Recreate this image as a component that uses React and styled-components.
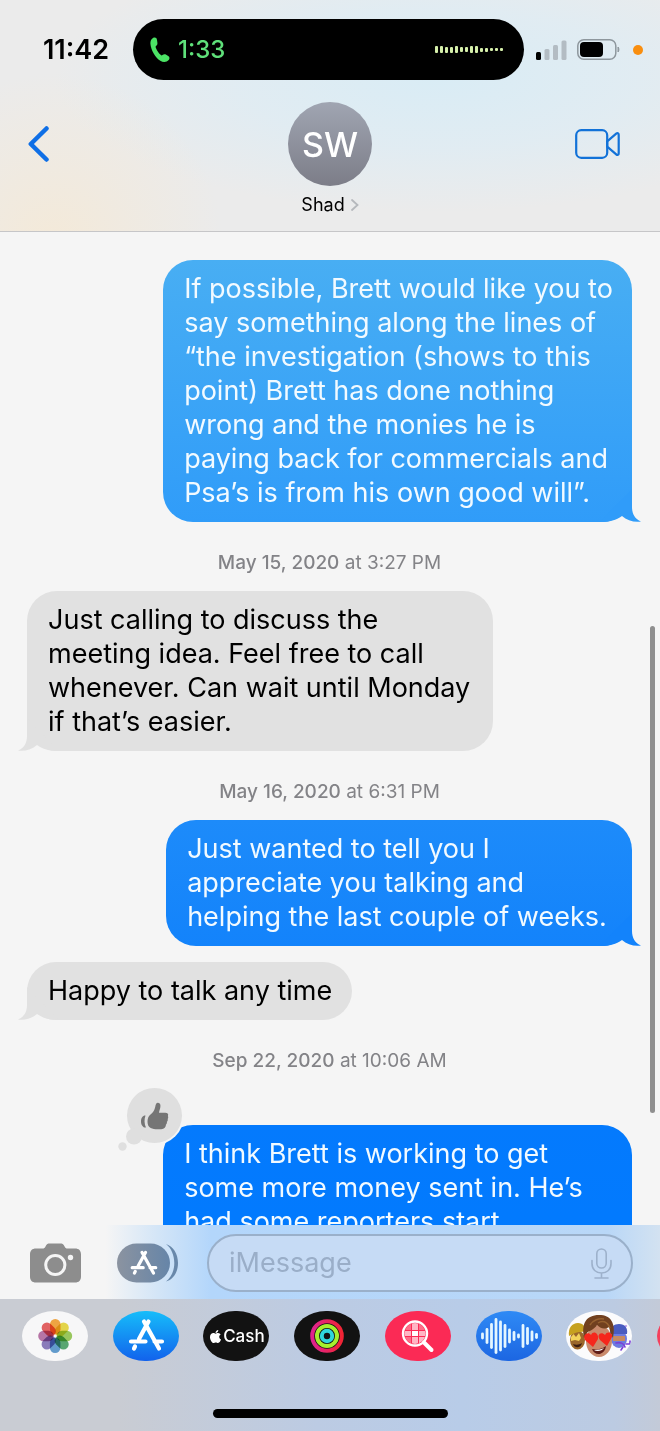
import React from 'react';
import styled, { createGlobalStyle, css } from 'styled-components';
import { FaApple } from 'react-icons/fa';

const GlobalStyle = createGlobalStyle`
  * {
    box-sizing: border-box;
  }

  body {
    margin: 0;
    font-family: Inter, 'Liberation Sans', sans-serif;
    color: #000;
    background: #f5f5f5;
  }

  button {
    padding: 0;
    border: none;
    background: none;
    font-family: inherit;
    color: inherit;
    cursor: pointer;
  }

  svg {
    display: block;
  }
`;

const levels = [7, 7, 6, 6, 7, 5, 5, 7, 7, 4, 4, 3, 3, 3];

const messages = [
  {
    id: 1,
    text: 'If possible, Brett would like you to say something along the lines of “the investigation (shows to this point) Brett has done nothing wrong and the monies he is paying back for commercials and Psa’s is from his own good will”.',
    sent: true,
    from: '#48aef3',
    to: '#309cf9',
    wide: true,
  },
  { id: 2, day: 'May 15, 2020', time: 'at 3:27 PM' },
  {
    id: 3,
    text: 'Just calling to discuss the meeting idea. Feel free to call whenever. Can wait until Monday if that’s easier.',
  },
  { id: 4, day: 'May 16, 2020', time: 'at 6:31 PM' },
  {
    id: 5,
    text: 'Just wanted to tell you I appreciate you talking and helping the last couple of weeks.',
    sent: true,
    from: '#1d8bfa',
    to: '#1383fb',
  },
  { id: 6, text: 'Happy to talk any time', follows: true },
  { id: 7, day: 'Sep 22, 2020', time: 'at 10:06 AM' },
  {
    id: 8,
    text: 'I think Brett is working to get some more money sent in. He’s had some reporters start',
    sent: true,
    from: '#047afd',
    to: '#007aff',
    liked: true,
    wide: true,
  },
];

const PhoneIcon = () => (
  <svg width="20" height="26" viewBox="0 0 20 26" fill="#4be365">
    <path d="M3 1C5 0 6.800.8 7 3l.4 2.800c.2 1.700-.3 2.500-1.300 3.100-.6.400-.6 1-.2 2 1.200 2.800 2.700 5 4.700 6.900.7.700 1.300.8 1.900.3 1.100-.9 2.300-1 3.700-.3l2 1.200c1.500.9 1.700 2.600.5 4-1.900 2.200-5.300 2.700-8.400.8C5.300 20.600 1 13.500.4 6.800.2 4.100 1.200 1.900 3 1z" />
  </svg>
);

const SignalIcon = () => (
  <svg width="31" height="20" viewBox="0 0 31 20">
    <rect x="0" y="12" width="5" height="8" rx="1.500" fill="#000" />
    <rect x="8.500" y="9" width="5" height="11" rx="1.500" fill="#b3bcc3" />
    <rect x="17" y="5" width="5" height="15" rx="1.500" fill="#b3bcc3" />
    <rect x="25.500" y="0.500" width="5" height="19.500" rx="1.500" fill="#b3bcc3" />
  </svg>
);

const BatteryIcon = () => (
  <svg width="43" height="21" viewBox="0 0 43 21">
    <rect x="0.800" y="0.800" width="38" height="19.400" rx="6" fill="none" stroke="#8e979d" strokeWidth="1.500" />
    <rect x="3" y="3" width="23" height="15" rx="4" fill="#000" />
    <path d="M41 8c1.200.8 1.200 4.200 0 5z" fill="#8e979d" stroke="#8e979d" />
  </svg>
);

const BackIcon = () => (
  <svg width="22" height="36" viewBox="0 0 22 36" fill="none" stroke="#0f6fe6" strokeWidth="4.500" strokeLinecap="round" strokeLinejoin="round">
    <path d="M18.500 2.500L2.800 18l15.700 15.500" />
  </svg>
);

const VideoIcon = () => (
  <svg width="45" height="30" viewBox="0 0 45 30" fill="none" stroke="#1272d8" strokeWidth="2.200" strokeLinejoin="round">
    <rect x="1.200" y="1.200" width="31" height="27.600" rx="5" />
    <path d="M32.200 12.300l9-7.600c1.300-1.100 2.500-.6 2.500 1.100v18.400c0 1.700-1.200 2.200-2.500 1.100l-9-7.600z" />
  </svg>
);

const TailShape = ({ color }) => (
  <svg width="41" height="33" viewBox="0 0 41 33">
    <path d="M32 0V18C32 25 35 30 41 32.500C34 33.500 27 31.500 22 27C16 31 10 33 0 33Z" fill={color} />
  </svg>
);

const LikeIcon = () => (
  <svg width="60" height="62" viewBox="0 0 60 62">
    <circle cx="32.500" cy="27.500" r="29.500" fill="#f5f5f5" />
    <circle cx="32.500" cy="27.500" r="27.500" fill="#dfdfdf" />
    <circle cx="12" cy="48.500" r="8" fill="#dfdfdf" />
    <circle cx="0.500" cy="58.500" r="4.200" fill="#dfdfdf" />
    <g fill="#757575">
      <path d="M28.500 26.500c2.600-1.800 4-4.300 4.700-7.600.5-2.600 1-4.300 2.800-4.200 2.300.1 2.800 2.300 2.300 4.800-.3 1.700-1 3.200-1.300 5.200h6.200c2.600 0 3.600 1.600 2.700 3.300.5 1 .4 2-.2 2.900.3 1.100 0 2.100-.8 2.900.2 1.100-.1 2-.9 2.700-.1 2.700-1.600 4.500-4.800 4.700-3.700.3-8 .3-10.500-1.100-2-1.200-3.200-3.300-3.200-6.700 0-3 1.200-5.500 3-6.900z" />
      <path d="M23.500 27.500c-1.400 3.700-1.300 8.500.5 12-2.700.4-5-2.400-5-6.100 0-3.500 1.800-6.100 4.500-5.900z" />
    </g>
  </svg>
);

const CameraIcon = () => (
  <svg width="51" height="40" viewBox="0 0 51 40">
    <path d="M6 5.500h6.500c1.600 0 2.300-.7 3-2.100C16.600 1 17.700.5 20 .5h10c2.300 0 3.500.5 4.600 2.900.7 1.400 1.400 2.100 3 2.100H45c3.900 0 6 2.100 6 6v22c0 3.900-2.100 6-6 6H6c-3.900 0-6-2.100-6-6v-22c0-3.900 2.100-6 6-6z" fill="#8d8d8d" />
    <circle cx="25.300" cy="22" r="9.600" fill="none" stroke="#f5f5f5" strokeWidth="3" />
    <circle cx="40.500" cy="14.500" r="2.700" fill="#f5f5f5" />
  </svg>
);

const AppStoreMark = () => (
  <g fill="none" stroke="#fff" strokeWidth="4.200" strokeLinecap="round">
    <path d="M35.500 10.500L26 28M22 35.500l-1 2M31 10.500L46 37.500M18 30.500h14.500M41.500 30.500H49" />
  </g>
);

const AppsToggleIcon = () => (
  <svg width="61" height="40" viewBox="0 0 61 40">
    <defs>
      <linearGradient id="toggle">
        <stop offset="0" stopColor="#8b93a0" />
        <stop offset="1" stopColor="#6685a8" />
      </linearGradient>
    </defs>
    <rect x="0" y="0.500" width="53" height="39" rx="19.500" fill="url(#toggle)" />
    <path d="M49 1c7.500 2.500 12 10 12 19s-4.500 16.500-12 18.500c5-4 8.300-10.500 8.300-18.500 0-7.500-3-15-8.300-19z" fill="#6988aa" />
    <g transform="translate(1.500 1.500) scale(0.760)">
      <AppStoreMark />
    </g>
  </svg>
);

const MicIcon = () => (
  <svg width="21" height="31" viewBox="0 0 21 31" fill="none" stroke="#9db1cb" strokeWidth="1.600" strokeLinecap="round">
    <rect x="5.800" y="1" width="9.400" height="19" rx="4.700" />
    <path d="M1 12.500v3c0 6 4 9.500 9.500 9.500s9.500-3.500 9.500-9.500v-3M10.500 25v5M4 30h13" />
  </svg>
);

const petals = ['#f59a23', '#e8d52c', '#8cc543', '#3f9e5b', '#4a8fca', '#7a68b5', '#b0619c', '#e5484a'];

const PhotosIcon = () => (
  <svg width="66" height="50" viewBox="0 0 66 50">
    {petals.map((color, index) => (
      <rect
        key={color}
        x="28"
        y="8"
        width="10.500"
        height="15.500"
        rx="5.200"
        fill={color}
        opacity="0.850"
        transform={`rotate(${index * 45} 33.200 25)`}
        style={{ mixBlendMode: 'multiply' }}
      />
    ))}
  </svg>
);

const AppStoreIcon = () => (
  <svg width="66" height="50" viewBox="0 0 66 50">
    <AppStoreMark />
  </svg>
);

const RingsIcon = () => (
  <svg width="66" height="50" viewBox="0 0 66 50" fill="none">
    <defs>
      <linearGradient id="move">
        <stop offset="0" stopColor="#e0248f" />
        <stop offset="1" stopColor="#f02434" />
      </linearGradient>
    </defs>
    <circle cx="33" cy="25" r="14.800" stroke="url(#move)" strokeWidth="4" />
    <circle cx="33" cy="25" r="10" stroke="#a5ef2e" strokeWidth="4" />
    <circle cx="33" cy="25" r="5.200" stroke="#2fd6dc" strokeWidth="4" />
  </svg>
);

const ImageSearchIcon = () => (
  <svg width="66" height="50" viewBox="0 0 66 50">
    <defs>
      <clipPath id="lens">
        <circle cx="30" cy="22.500" r="10.500" />
      </clipPath>
    </defs>
    <g clipPath="url(#lens)">
      <path d="M19 12h7v7h-7zM34 12h7v7h-7zM19 26h7v7h-7z" fill="#ff6b87" />
      <path d="M27 12h6v7h-6zM19 20h7v5h-7zM27 26h6v7h-6zM34 20h7v5h-7zM34 26h7v7h-7z" fill="#ffb5c4" />
      <path d="M27 20h6v5h-6z" fill="#fff" />
    </g>
    <circle cx="30" cy="22.500" r="12" fill="none" stroke="#fff" strokeWidth="2.400" />
    <path d="M39 31.500l7.500 7.500" stroke="#fff" strokeWidth="4" strokeLinecap="round" />
  </svg>
);

const bars = [4, 13, 23, 33, 28, 21, 12, 7, 2, 21, 15, 8, 3];

const WaveIcon = () => (
  <svg width="66" height="50" viewBox="0 0 66 50" stroke="#e4f6ff" strokeWidth="2.800" strokeLinecap="round">
    {bars.map((height, index) => (
      <line key={index} x1={6.5 + index * 4.5} x2={6.5 + index * 4.5} y1={25 - height / 2} y2={25 + height / 2} />
    ))}
  </svg>
);

const MemojiIcon = () => (
  <svg width="66" height="50" viewBox="0 0 66 50">
    <ellipse cx="11.500" cy="29" rx="7.500" ry="9.500" fill="#9b672b" />
    <path d="M3 25c-1-8 3-13 9-13 5 0 8 4 8 9-5-1-11 0-17 4z" fill="#c6a11f" />
    <path d="M5 26l2.500-3 2.500 3 3-4 2 5-2 3-4-1-4 1z" fill="#f2d35a" />
    <path d="M7 33c3 1 6 1 9-1-1 5-7 6-9 1z" fill="#3b1d12" />
    <ellipse cx="53" cy="28" rx="8" ry="9" fill="#6d7be0" />
    <path d="M44 23c0-7 4-10 9-10 6 0 9 4 8 10z" fill="#4a5cc0" />
    <path d="M47 25h12v5H47z" fill="#c78a62" />
    <path d="M50 32c4-1 8 0 9 4M60 33h4v-3M60 15v0M55 39l2-3" stroke="#7b3fd6" strokeWidth="1.600" fill="none" strokeLinecap="round" />
    <ellipse cx="33" cy="30" rx="13" ry="16" fill="#c98a6c" />
    <path d="M18 27C15 13 20 4 33 4c12 0 17 8 14 23-2-3-3-7-4-11-5 3-9 1-12-2-3 5-9 6-10 8-1 2-1 4-3 5z" fill="#71401f" />
    <path d="M24 14c3-5 9-7 14-6M32 12c4-3 9-2 12 5" stroke="#96602f" strokeWidth="1.500" fill="none" />
    <path d="M27 36l-8-7c-3-5 3-9 6-5 2-5 8-2 7 4z" fill="#f5271c" />
    <path d="M41 35l-7-6c-4-5 1-9 5-5 2-5 8-2 7 2z" fill="#f5271c" />
    <path d="M26 38c5 1 10 0 14-3-1 9-11 11-14 3z" fill="#601c16" />
    <path d="M28 39c4 0 8-1 10-2-2 3-7 4-10 2z" fill="#fff" />
  </svg>
);

const Screen = styled.div`
  display: flex;
  flex-direction: column;
  height: 100vh;
  overflow: hidden;
  background: #f5f5f5;
`;

const Header = styled.header`
  flex: none;
  border-bottom: 1px solid #c6c6c8;
  background:
    radial-gradient(circle at 8% 105%, rgba(246, 233, 212, 0.8), rgba(246, 233, 212, 0) 26%),
    radial-gradient(ellipse at 66% 34%, #d9ecf5, rgba(222, 236, 244, 0.8) 32%, rgba(235, 235, 235, 0) 62%),
    #ebebeb;
`;

const StatusBar = styled.div`
  display: grid;
  grid-template-columns: 133px 1fr 136px;
  align-items: center;
  padding-top: 19px;
`;

const Clock = styled.time`
  padding-left: 19px;
  text-align: center;
  font-size: 27px;
  font-weight: 600;
  line-height: 34px;
`;

const Island = styled.div`
  display: flex;
  align-items: center;
  height: 61px;
  padding: 0 21px 0 17px;
  border-radius: 31px;
  background: #000;
`;

const CallTime = styled.span`
  flex: 1;
  padding-left: 8px;
  color: #5fe07a;
  font-size: 24px;
  font-weight: 500;
  line-height: 34px;
`;

const AudioLevels = styled.div`
  display: flex;
  align-items: center;
  gap: 2px;
`;

const Level = styled.span`
  width: 3px;
  height: ${(props) => props.$size}px;
  border-radius: 1px;
  background: #d5efaa;
`;

const StatusIcons = styled.div`
  display: flex;
  align-items: center;
  gap: 10px;
  padding-left: 12px;
`;

const MicDot = styled.span`
  width: 10px;
  height: 10px;
  margin-left: 3px;
  border-radius: 50%;
  background: #f98e0f;
`;

const NavBar = styled.nav`
  display: grid;
  grid-template-columns: 1fr auto 1fr;
  align-items: start;
  padding: 22px 40px 15px 28px;
`;

const BackButton = styled.button`
  justify-self: start;
  margin-top: 24px;
`;

const VideoButton = styled.button`
  justify-self: end;
  margin-top: 27px;
`;

const Contact = styled.button`
  display: flex;
  flex-direction: column;
  align-items: center;
  gap: 8px;
  padding-left: 12px;
`;

const Avatar = styled.span`
  display: grid;
  place-items: center;
  width: 84px;
  height: 84px;
  border-radius: 50%;
  background: linear-gradient(#a0a5b2, #7c7d88);
  color: #fff;
  font-size: 34px;
  font-weight: 500;
`;

const ContactName = styled.span`
  display: flex;
  align-items: center;
  gap: 6px;
  font-size: 18px;
  line-height: 22px;
`;

const Thread = styled.main`
  position: relative;
  flex: 1;
  min-height: 0;
  overflow: hidden;
  padding: 28px 28px 0 27px;
`;

const MessageList = styled.div`
  display: flex;
  flex-direction: column;
  align-items: flex-start;
`;

const Bubble = styled.div`
  position: relative;
  max-width: ${(props) => (props.$wide ? '77.5%' : '77%')};
  margin-top: ${(props) => (props.$follows ? '16px' : '0')};
  padding: 12px ${(props) => (props.$wide ? '14px' : '20px')} 12px 21px;
  border-radius: 30px;
  background: #e1e1e1;
  font-size: 27px;
  line-height: 34px;

  ${(props) =>
    props.$sent &&
    css`
      align-self: flex-end;
      background: linear-gradient(${props.$from}, ${props.$to});
      color: #f2faff;
    `}

  ${(props) =>
    props.$liked &&
    css`
      margin-top: 36px;
      height: 180px;
    `}
`;

const Tail = styled.span`
  position: absolute;
  bottom: 0;
  right: -9px;

  ${(props) =>
    !props.$sent &&
    css`
      right: auto;
      left: -9px;
      transform: scaleX(-1);
    `}
`;

const BubbleText = styled.span`
  position: relative;
`;

const Reaction = styled.span`
  position: absolute;
  top: -37px;
  left: -41px;

  svg {
    overflow: visible;
  }
`;

const DateLine = styled.p`
  align-self: center;
  margin: 31px 0 18px;
  color: #838387;
  font-size: 19px;
  line-height: 20px;

  b {
    font-weight: 500;
  }
`;

const ScrollThumb = styled.div`
  position: absolute;
  top: 39.7%;
  right: 5px;
  width: 5px;
  height: 49%;
  border-radius: 3px;
  background: #8f8f8f;
`;

const InputBar = styled.form`
  flex: none;
  display: flex;
  align-items: center;
  padding: 9px 27px 7px 30px;
  background: linear-gradient(to right, #f5f5f5 16%, #d3e5f7 24%, #b3d6fb 32%, #b9d7f7 92%, #d3e2f1 100%);
`;

const AppsButton = styled.button`
  margin: 0 29px 0 36px;
`;

const Field = styled.label`
  flex: 1;
  display: flex;
  align-items: center;
  min-width: 0;
  height: 58px;
  padding: 0 19px 0 20px;
  border: 2px solid #9ab0ca;
  border-radius: 29px;
  background: #c6dbf5;
`;

const TextInput = styled.input`
  flex: 1;
  min-width: 0;
  padding: 0;
  border: none;
  outline: none;
  background: transparent;
  font-family: inherit;
  font-size: 27px;
  line-height: 34px;

  &::placeholder {
    color: #9aaec8;
    opacity: 1;
  }
`;

const Drawer = styled.footer`
  flex: none;
  overflow: hidden;
  padding: 12px 0 13px;
  background: linear-gradient(to right, #c9ccd3 18%, #bccbe3 48%, #b8cce8 70%, #bccbe2 93%, #c3cad8 100%);
`;

const AppStrip = styled.div`
  display: flex;
  justify-content: space-between;
  margin: 0 -63px 0 22px;
`;

const AppButton = styled.button`
  display: flex;
  align-items: center;
  justify-content: center;
  width: 66px;
  height: 50px;
  overflow: hidden;
  border-radius: 32px / 25px;
  background: ${(props) => props.$fill};
  color: #fff;
  font-size: 17px;
  font-weight: 500;
`;

const HomeIndicator = styled.div`
  width: 235px;
  height: 9px;
  margin: 48px auto 0;
  border-radius: 5px;
  background: #000;
`;

const Message = ({ message }) => (
  <Bubble
    $sent={message.sent}
    $from={message.from}
    $to={message.to}
    $wide={message.wide}
    $follows={message.follows}
    $liked={message.liked}
  >
    <Tail $sent={message.sent}>
      <TailShape color={message.sent ? message.to : '#e1e1e1'} />
    </Tail>
    <BubbleText>{message.text}</BubbleText>
    {message.liked && (
      <Reaction>
        <LikeIcon />
      </Reaction>
    )}
  </Bubble>
);

const App = () => {
  return (
    <Screen>
      <GlobalStyle />
      <Header>
        <StatusBar>
          <Clock>11:42</Clock>
          <Island>
            <PhoneIcon />
            <CallTime>1:33</CallTime>
            <AudioLevels>
              {levels.map((size, index) => (
                <Level key={index} $size={size} />
              ))}
            </AudioLevels>
          </Island>
          <StatusIcons>
            <SignalIcon />
            <BatteryIcon />
            <MicDot />
          </StatusIcons>
        </StatusBar>
        <NavBar>
          <BackButton aria-label="Back">
            <BackIcon />
          </BackButton>
          <Contact>
            <Avatar>SW</Avatar>
            <ContactName>
              Shad
              <svg width="8" height="14" viewBox="0 0 8 14" fill="none" stroke="#b5b8bc" strokeWidth="1.800" strokeLinecap="round">
                <path d="M1 2l5.500 5L1 12" />
              </svg>
            </ContactName>
          </Contact>
          <VideoButton aria-label="Video call">
            <VideoIcon />
          </VideoButton>
        </NavBar>
      </Header>

      <Thread>
        <MessageList>
          {messages.map((message) =>
            message.day ? (
              <DateLine key={message.id}>
                <b>{message.day}</b> {message.time}
              </DateLine>
            ) : (
              <Message key={message.id} message={message} />
            )
          )}
        </MessageList>
        <ScrollThumb />
      </Thread>

      <InputBar onSubmit={(e) => e.preventDefault()}>
        <button type="button" aria-label="Camera">
          <CameraIcon />
        </button>
        <AppsButton type="button" aria-label="Apps">
          <AppsToggleIcon />
        </AppsButton>
        <Field>
          <TextInput type="text" placeholder="iMessage" aria-label="iMessage" />
          <MicIcon />
        </Field>
      </InputBar>

      <Drawer>
        <AppStrip>
          <AppButton aria-label="Photos" $fill="#f7f7f8">
            <PhotosIcon />
          </AppButton>
          <AppButton aria-label="App Store" $fill="linear-gradient(#16bdfa, #1262ec)">
            <AppStoreIcon />
          </AppButton>
          <AppButton $fill="#121212">
            <FaApple size={15} />
            Cash
          </AppButton>
          <AppButton aria-label="Fitness" $fill="#121212">
            <RingsIcon />
          </AppButton>
          <AppButton aria-label="Image search" $fill="#fb2a55">
            <ImageSearchIcon />
          </AppButton>
          <AppButton aria-label="Audio" $fill="linear-gradient(#2f8af5, #1c66e2)">
            <WaveIcon />
          </AppButton>
          <AppButton aria-label="Memoji" $fill="#fbfbfc">
            <MemojiIcon />
          </AppButton>
          <AppButton aria-label="Music" $fill="#f5405c" />
        </AppStrip>
        <HomeIndicator />
      </Drawer>
    </Screen>
  );
};

export default App;
